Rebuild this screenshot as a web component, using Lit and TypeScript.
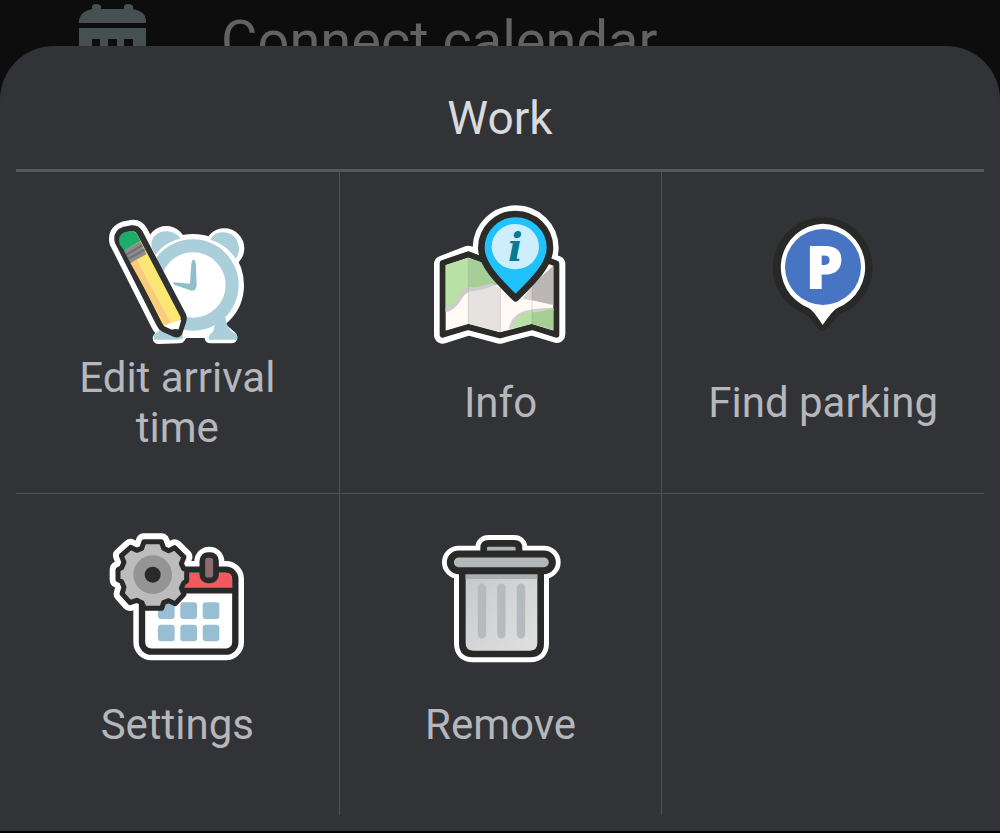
import { LitElement, html, svg, css } from "lit";
import { customElement, property } from "lit/decorators.js";

const pencilPath =
  "M84 110 Q78 84 104 74 L124 70 Q142 67 151 84 L280 330 Q284 338 281 348 L269 384 Q264 391 255 387 L222 372 Q212 366 208 356 Z";

const clockPencil = svg`
  <g fill="#fff" stroke="#fff" stroke-width="34" stroke-linejoin="round" stroke-linecap="round">
    <circle cx="230" cy="122" r="42"/>
    <circle cx="404" cy="130" r="43"/>
    <circle cx="310" cy="240" r="136"/>
    <path d="M206 400 L230 370 H396 L426 396 L426 398 H362 L358 382 H280 L270 398 Z"/>
  </g>
  <path d=${pencilPath} fill="#fff" stroke="#fff" stroke-width="50" stroke-linejoin="round"/>
  <g fill="#abcfda">
    <path d="M186 128 C180 96 205 77 232 79 C250 80 264 88 272 101 C240 108 216 124 198 150 Z"/>
    <path d="M362 104 C372 82 402 76 424 88 C448 102 456 136 438 161 C420 134 396 114 362 104 Z"/>
    <circle cx="310" cy="240" r="137"/>
    <path d="M376 345 L408 338 C410 362 420 378 438 386 Q445 392 442 404 H358 Q354 392 366 384 Q374 380 376 345 Z"/>
    <path d="M208 370 L275 370 L280 400 Q274 404 262 404 H194 Q186 390 208 378 Z"/>
  </g>
  <circle cx="310" cy="240" r="98" fill="#fff"/>
  <path d="M312 163 Q305 166 304 188 L301 236 L252 232 Q248 235 254 239 L306 257 Q320 258 321 240 L319 185 Q318 166 312 163 Z" fill="#8fbdcc"/>
  <path d=${pencilPath} fill="#fae57b" stroke="#2f3032" stroke-width="18" stroke-linejoin="round"/>
  <path d="M122 174 L141 164 L242 352 L226 360 Z" fill="#fbcb7b"/>
  <path d="M158 155 L168 150 L270 344 L258 350 Z" fill="#fce96c"/>
  <path d="M90 118 Q82 92 104 82 L122 78 Q134 76 142 86 L152 108 L104 137 Z" fill="#1dac6b"/>
  <path d="M103 137 L152 109 L170 148 L122 174 Z" fill="#8c8c8e"/>
  <path d="M110 149 L158 121 M116 161 L165 134" stroke="#707073" stroke-width="6"/>
  <path d="M221 362 L275 344 L266 376 L250 376 Z" fill="#fff"/>
  <path d="M240 378 Q252 368 269 374 L263 390 Z" fill="#2f3032"/>`;

const pinPath = "M287 310 C236 260 184 210 184 158 A103 101 0 0 1 390 158 C390 210 338 260 287 310 Z";

const mapInfo = svg`
  <g fill="#fff" stroke="#fff" stroke-width="52" stroke-linejoin="round">
    <path d="M68 208 L145 178 L240 214 L336 178 L410 208 V418 L336 395 L240 420 L145 395 L68 420 Z"/>
    <path d=${pinPath}/>
  </g>
  <path d="M68 204 L145 178 L240 214 L336 178 L409 206 V419 L336 396 L240 421 L145 396 L68 419 Z" fill="#fffaf4" stroke="#2b2b29" stroke-width="18" stroke-linejoin="round"/>
  <path d="M77 211 L145 188 V282 C122 300 120 325 77 350 Z" fill="#b8e2a5"/>
  <path d="M145 188 L241 221 V268 L145 284 Z" fill="#a6cf95"/>
  <path d="M77 338 C112 330 108 290 145 278 V292 C122 302 122 340 77 352 Z" fill="#cecbca"/>
  <path d="M145 281 Q180 278 212 266 L241 280 V411 L145 386 Z" fill="#e6e2df"/>
  <path d="M145 276 Q185 278 212 265 L223 270 Q190 287 145 290 Z" fill="#cecbca"/>
  <path d="M336 270 L400 212 V330 L336 316 Z" fill="#bcb7b5"/>
  <path d="M336 270 V316 L308 312 Z" fill="#d8d3d0"/>
  <path d="M266 402 C278 350 310 341 400 338 V350 C325 350 292 362 280 400 Z" fill="#d4d0cd"/>
  <path d="M279 400 C290 358 310 354 336 352 V386 Z" fill="#b8e2a5"/>
  <path d="M336 352 Q362 352 400 339 V406 L336 386 Z" fill="#a6cf95"/>
  <path d="M145 188 V386 M241 280 V411 M336 280 V386" stroke="#77746f" stroke-opacity=".35" stroke-width="2"/>
  <path d=${pinPath} fill="#1fc2fd" stroke="#2b2b29" stroke-width="20" stroke-linejoin="round"/>
  <ellipse cx="286" cy="155" rx="71" ry="68" fill="#cdeefd"/>
  <text x="286" y="199" text-anchor="middle" font-family="DejaVu Serif, serif" font-weight="700" font-style="italic" font-size="116" fill="#087990">i</text>`;

const parking = svg`
  <path d="M188 55 A132 132 0 0 1 238 309 Q220 318 188 360 Q156 318 138 309 A132 132 0 0 1 188 55 Z" fill="#282827" stroke="#282827" stroke-width="36" stroke-linejoin="round"/>
  <path d="M188 56 A131 131 0 0 1 232 309 Q220 314 188 360 Q158 314 146 309 A131 131 0 0 1 188 56 Z" fill="#fff"/>
  <circle cx="189" cy="186" r="114" fill="#4774c3"/>
  <text x="193" y="251" text-anchor="middle" font-family="Open Sans, sans-serif" font-weight="800" font-size="182" fill="#fff">P</text>`;

const gearPath =
  "M148 62 H200 L207 82 L222 89 L240 80 L268 108 L260 128 L267 143 L276 146 V180 L267 186 L260 202 L268 220 L242 248 L222 239 L207 245 L201 262 H149 L142 245 L126 238 L106 245 L82 218 L88 199 L81 182 L70 176 V146 L81 140 L88 124 L80 104 L108 79 L126 88 L141 82 Z";

const calendarGear = svg`
  <g fill="#fff" stroke="#fff" stroke-linejoin="round">
    <rect x="142" y="146" width="280" height="246" rx="28" stroke-width="52"/>
    <rect x="330" y="108" width="28" height="60" rx="14" stroke-width="62"/>
    <path d=${gearPath} stroke-width="50"/>
  </g>
  <rect x="142" y="146" width="280" height="246" rx="28" fill="#fff" stroke="#292929" stroke-width="19"/>
  <path d="M200 156 H396 Q412 156 412 172 V202 H200 Z" fill="#f4585f"/>
  <path d="M150 209 H420" stroke="#292929" stroke-width="17"/>
  <g fill="#98bed3">
    <rect x="190" y="244" width="50" height="50" rx="9"/>
    <rect x="257" y="244" width="50" height="50" rx="9"/>
    <rect x="324" y="244" width="50" height="50" rx="9"/>
    <rect x="190" y="311" width="50" height="50" rx="9"/>
    <rect x="257" y="311" width="50" height="50" rx="9"/>
    <rect x="324" y="311" width="50" height="50" rx="9"/>
  </g>
  <rect x="323" y="102" width="41" height="76" rx="17" fill="#8c6c71" stroke="#292929" stroke-width="17"/>
  <path d=${gearPath} fill="#bcbcbc" stroke="#292929" stroke-width="15" stroke-linejoin="round"/>
  <circle cx="174" cy="161" r="58" fill="#949494"/>
  <circle cx="174" cy="161" r="24" fill="#292929"/>`;

const trash = svg`
  <defs>
    <linearGradient id="can" x1="0" y1="0" x2="1" y2="1">
      <stop offset="0" stop-color="#c4c7ca"/>
      <stop offset=".35" stop-color="#cfd1d3"/>
      <stop offset="1" stop-color="#e0e1e2"/>
    </linearGradient>
  </defs>
  <g fill="#fff" stroke="#fff" stroke-linejoin="round" stroke-width="50">
    <rect x="61" y="84" width="306" height="50" rx="25"/>
    <path d="M161 84 V66 Q161 52 176 52 H252 Q267 52 267 66 V84 Z"/>
    <path d="M97 134 H332 V352 Q332 384 300 384 H129 Q97 384 97 352 Z"/>
  </g>
  <path d="M97 134 H332 V352 Q332 384 300 384 H129 Q97 384 97 352 Z" fill="url(#can)" stroke="#292a27" stroke-width="20"/>
  <path d="M107 142 H322 V159 H107 Z" fill="#aaaeb1"/>
  <path d="M156 185 V325 M214 185 V325 M273 185 V325" stroke="#b4babd" stroke-width="25" stroke-linecap="round"/>
  <path d="M161 84 V66 Q161 52 176 52 H252 Q267 52 267 66 V84" fill="#b0b6b8" stroke="#292a27" stroke-width="20"/>
  <rect x="61" y="84" width="306" height="50" rx="25" fill="#b2b8ba" stroke="#292a27" stroke-width="21"/>`;

const actions = [
  { label: "Edit arrival time", viewBox: "22 -15 480 450", art: clockPencil },
  { label: "Info", viewBox: "0 15 480 450", art: mapInfo },
  { label: "Find parking", viewBox: "-51 -15 480 450", art: parking },
  { label: "Settings", viewBox: "7 3 480 450", art: calendarGear },
  { label: "Remove", viewBox: "-30 -12 480 450", art: trash },
];

@customElement("sheet-action")
export class SheetAction extends LitElement {
  @property() label = "";
  @property() viewBox = "0 0 480 450";
  @property({ attribute: false }) art: unknown;

  static styles = css`
    :host {
      display: block;
    }
    .action {
      display: flex;
      flex-direction: column;
      align-items: center;
      box-sizing: border-box;
      width: 100%;
      height: 100%;
      margin: 0;
      padding: 28px 40px 32px;
      border: 0;
      background: none;
      color: #b6b7bd;
      font: 400 42px/50px Roboto, sans-serif;
      cursor: pointer;
    }
    .icon {
      flex: none;
      width: 160px;
      height: 150px;
    }
    .label {
      display: flex;
      align-items: center;
      min-height: 100px;
      margin-top: 3px;
      text-align: center;
    }
  `;

  render() {
    return html`<button class="action" type="button">
      <svg class="icon" viewBox=${this.viewBox} aria-hidden="true">${this.art}</svg>
      <span class="label">${this.label}</span>
    </button>`;
  }
}

@customElement("app-root")
export class AppRoot extends LitElement {
  static styles = css`
    :host {
      display: flex;
      flex-direction: column;
      box-sizing: border-box;
      min-height: 100vh;
      border-bottom: 2px solid #000;
      background: #0d0d0d;
      font-family: Roboto, sans-serif;
    }
    .behind {
      display: flex;
      align-items: flex-start;
      gap: 74px;
      height: 46px;
      padding-left: 79px;
      color: #626262;
      font-size: 56px;
      line-height: 82px;
      white-space: nowrap;
    }
    .calendar {
      flex: none;
      width: 68px;
      height: 80px;
    }
    .sheet {
      position: relative;
      display: flex;
      flex: 1;
      flex-direction: column;
      padding: 0 16px 16px;
      border-radius: 54px 54px 0 0;
      background: #323336;
    }
    .title {
      margin: 0;
      padding: 42px 0 21px;
      border-bottom: 3px solid #58595c;
      color: #d9dade;
      font-size: 46px;
      font-weight: 400;
      line-height: 60px;
      text-align: center;
    }
    .grid {
      display: grid;
      flex: 1;
      grid-template-columns: repeat(3, 1fr);
      grid-auto-rows: 1fr;
    }
    .cell {
      border: 0 solid #505154;
    }
    .cell:not(:nth-child(3n + 1)) {
      border-left-width: 1px;
    }
    .cell:nth-child(-n + 3) {
      border-bottom-width: 1px;
    }
  `;

  render() {
    return html`
      <div class="behind">
        <svg class="calendar" viewBox="0 0 68 80" aria-hidden="true">
          <path fill="#465050" d="M0 23 V20 Q2 11 13 9 V6 Q14 4 17 4 Q21 4 22 6 V9 H45 V6 Q46 4 49 4 Q53 4 54 6 V9 Q66 11 67 20 V23 Z M0 28 H67 V72 Q67 76 63 76 H4 Q0 76 0 72 Z"/>
          <path fill="#0d0d0d" d="M13 39 H21 V47 H13 Z M29 39 H38 V47 H29 Z M45 39 H54 V47 H45 Z"/>
        </svg>
        <span>Connect calendar</span>
      </div>
      <main class="sheet">
        <h1 class="title">Work</h1>
        <div class="grid">
          ${actions.map(
            (a) => html`<sheet-action class="cell" .label=${a.label} .viewBox=${a.viewBox} .art=${a.art}></sheet-action>`
          )}
          <div class="cell"></div>
        </div>
      </main>
    `;
  }
}
